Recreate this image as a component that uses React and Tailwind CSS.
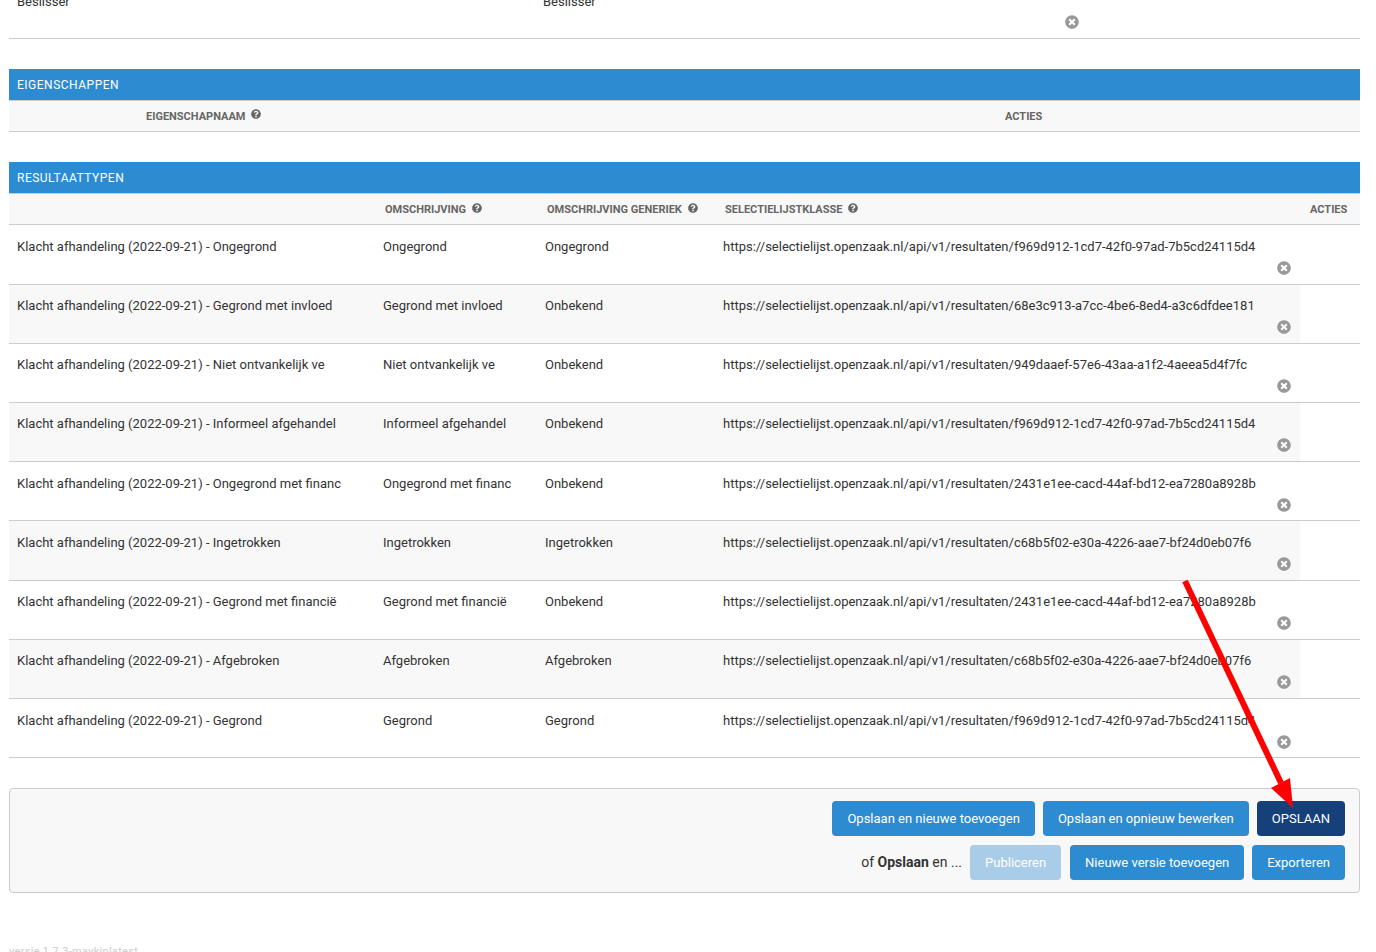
import React from 'react';
import { FaQuestionCircle, FaTimesCircle } from 'react-icons/fa';

const base = 'https://selectielijst.openzaak.nl/api/v1/resultaten/';

const resultaten = [
  { naam: 'Ongegrond', generiek: 'Ongegrond', uuid: 'f969d912-1cd7-42f0-97ad-7b5cd24115d4' },
  { naam: 'Gegrond met invloed', generiek: 'Onbekend', uuid: '68e3c913-a7cc-4be6-8ed4-a3c6dfdee181' },
  { naam: 'Niet ontvankelijk ve', generiek: 'Onbekend', uuid: '949daaef-57e6-43aa-a1f2-4aeea5d4f7fc' },
  { naam: 'Informeel afgehandel', generiek: 'Onbekend', uuid: 'f969d912-1cd7-42f0-97ad-7b5cd24115d4' },
  { naam: 'Ongegrond met financ', generiek: 'Onbekend', uuid: '2431e1ee-cacd-44af-bd12-ea7280a8928b' },
  { naam: 'Ingetrokken', generiek: 'Ingetrokken', uuid: 'c68b5f02-e30a-4226-aae7-bf24d0eb07f6' },
  { naam: 'Gegrond met financië', generiek: 'Onbekend', uuid: '2431e1ee-cacd-44af-bd12-ea7280a8928b' },
  { naam: 'Afgebroken', generiek: 'Afgebroken', uuid: 'c68b5f02-e30a-4226-aae7-bf24d0eb07f6' },
  { naam: 'Gegrond', generiek: 'Gegrond', uuid: 'f969d912-1cd7-42f0-97ad-7b5cd24115d4' },
];

const Help = () => <FaQuestionCircle className="inline-block ml-[3px] w-[10px] h-[10px] text-[#666] align-[0.5px]" />;

const Remove = () => <FaTimesCircle className="w-[14px] h-[14px] text-[#999]" />;

const SectionTitle = ({ children }) => (
  <div className="h-[32px] bg-[#2d8bd1] border-b border-[#ccc] pl-2 pt-[8px] text-[12px] leading-4 tracking-[0.5px] text-white uppercase">
    {children}
  </div>
);

const thClass = 'pl-[10px] text-left align-middle font-bold text-[11px] text-[#666] uppercase border-b border-[#ccc]';
const eigenTh = `${thClass} h-[30.3px] pt-[2px]`;
const resultTh = `${thClass} h-[31px] pt-[3px]`;
const tdClass = 'pl-2 pt-[11.5px] align-top leading-5';

const Button = ({ children, className = 'bg-[#2d8bd1]' }) => (
  <button className={`h-[35px] px-[15px] pt-[1px] rounded-[4px] text-[13px] text-white ${className}`}>
    {children}
  </button>
);

export default function App() {
  return (
    <div className="h-[952px] overflow-hidden bg-white font-['Roboto',sans-serif] text-[13px] text-[#333]">
      <div className="ml-[9px] w-[1351px] -mt-[22px]">
        <div className="flex h-[61px] border-b border-[#ccc] mb-[30px]">
          <div className="w-[526px] pl-2 pt-[14px] leading-5">Beslisser</div>
          <div className="w-[553px] pl-2 pt-[14px] leading-5">
            Beslisser
            <div className="flex justify-end pr-[9px] mt-[3px]"><Remove /></div>
          </div>
        </div>

        <SectionTitle>Eigenschappen</SectionTitle>
        <table className="w-full table-fixed border-collapse bg-[#f8f8f8] mb-[30px]">
          <thead>
            <tr>
              <th className={`${eigenTh} w-[986px] !pl-[137px]`}>Eigenschapnaam <Help /></th>
              <th className={eigenTh}>Acties</th>
            </tr>
          </thead>
        </table>

        <SectionTitle>Resultaattypen</SectionTitle>
        <table className="w-full table-fixed border-collapse mb-[29.3px]">
          <thead className="bg-[#f8f8f8]">
            <tr>
              <th className={`${resultTh} w-[366px]`}></th>
              <th className={`${resultTh} w-[162px]`}>Omschrijving <Help /></th>
              <th className={`${resultTh} w-[178px]`}>Omschrijving generiek <Help /></th>
              <th className={`${resultTh} w-[585px]`}>Selectielijstklasse <Help /></th>
              <th className={resultTh}>Acties</th>
            </tr>
          </thead>
          <tbody>
            {resultaten.map((r, i) => {
              const bg = i % 2 === 1 ? 'bg-[#f8f8f8]' : '';
              return (
                <tr key={i} className="h-[59.22px] border-b border-[#ccc]">
                  <td className={`${tdClass} ${bg}`}>Klacht afhandeling (2022-09-21) - {r.naam}</td>
                  <td className={`${tdClass} ${bg}`}>{r.naam}</td>
                  <td className={`${tdClass} ${bg}`}>{r.generiek}</td>
                  <td className={`${tdClass} ${bg}`}>
                    <div className="whitespace-nowrap">{base}{r.uuid}</div>
                    <div className="flex justify-end pr-[9px] mt-[4px]"><Remove /></div>
                  </td>
                  <td></td>
                </tr>
              );
            })}
          </tbody>
        </table>

        <div className="h-[105px] bg-[#f8f8f8] border border-[#ccc] rounded-[4px] pt-3 pr-[14px] flex flex-col items-end gap-[9px]">
          <div className="flex gap-2">
            <Button>Opslaan en nieuwe toevoegen</Button>
            <Button>Opslaan en opnieuw bewerken</Button>
            <Button className="bg-[#15407a]">OPSLAAN</Button>
          </div>
          <div className="flex items-center gap-2">
            <span className="text-[14px]">of <b>Opslaan</b> en ...</span>
            <Button className="bg-[#a9cde9] mr-px">Publiceren</Button>
            <Button>Nieuwe versie toevoegen</Button>
            <Button>Exporteren</Button>
          </div>
        </div>

        <div className="mt-[51px] text-[11px] leading-4 tracking-[0.3px] text-[#ccc]">versie 1.7.3-maykinlatest</div>
      </div>

      {/* annotation arrow over the page */}
      <svg className="absolute left-0 top-0 pointer-events-none" width="1376" height="952">
        <line x1="1185" y1="581" x2="1281" y2="783" stroke="#ff0000" strokeWidth="6" />
        <polygon points="1271,788 1290,778 1293,808" fill="#ff0000" />
      </svg>
    </div>
  );
}
